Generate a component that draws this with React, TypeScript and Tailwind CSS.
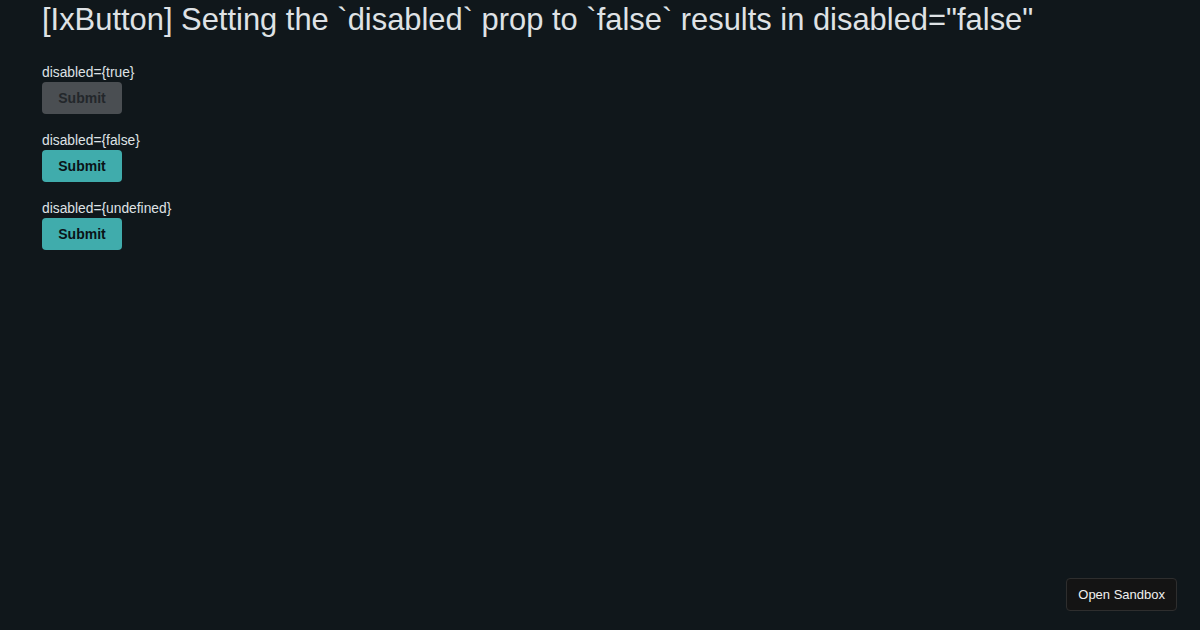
import React from 'react';

const CASES = [
  { label: 'disabled={true}', disabled: true },
  { label: 'disabled={false}', disabled: false },
  { label: 'disabled={undefined}', disabled: false },
];

export default function App() {
  return (
    <div
      className="relative w-[1200px] h-[630px] overflow-hidden bg-[#10171b] text-[#e3e5e8]"
      style={{ fontFamily: '"Liberation Sans", Arial, sans-serif' }}
    >
      <div className="px-[42px] pt-[2px]">
        <h1 className="text-[30.9px] leading-[36px] font-normal text-[#dfe2e5]">
          [IxButton] Setting the `disabled` prop to `false` results in disabled="false"
        </h1>

        <div className="mt-[26px] flex flex-col gap-[18px]">
          {CASES.map((c) => (
            <div key={c.label} className="flex flex-col">
              <span className="text-[13.8px] leading-[18px] text-[#dfe2e5]">{c.label}</span>
              <button
                disabled={c.disabled}
                className={
                  c.disabled
                    ? 'w-[80px] h-[32px] rounded-[4px] bg-[#4a4e52] text-[#23272b] text-[14px] font-bold'
                    : 'w-[80px] h-[32px] rounded-[4px] bg-[#40acac] text-[#0a1317] text-[14px] font-bold'
                }
              >
                Submit
              </button>
            </div>
          ))}
        </div>
      </div>

      {/* sandbox link */}
      <button className="absolute right-[23px] bottom-[19px] h-[33px] px-[11px] rounded-[4px] bg-[#141414] border border-[#2e2e2e] text-[13px] text-[#f0f0f0]">
        Open Sandbox
      </button>
    </div>
  );
}
